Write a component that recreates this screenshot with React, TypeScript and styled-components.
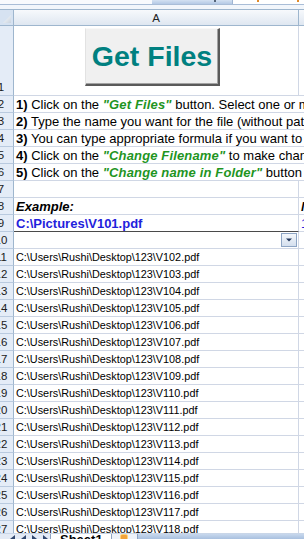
import React from 'react';
import styled, { createGlobalStyle } from 'styled-components';

const GlobalStyle = createGlobalStyle`
  html, body { margin: 0; padding: 0; background: #fff; }
  body { font-family: "Liberation Sans", Arial, sans-serif; color: #000; }
`;

const Window = styled.div`
  width: 304px;
  height: 539px;
  overflow: hidden;
  display: flex;
  flex-direction: column;
  background: #fff;
`;

/* ---------- top strip (formula bar edge) ---------- */
const TopStrip = styled.div`
  height: 9px;
  flex: none;
  display: flex;
  flex-direction: column;
  background: #f2f6fb;
`;
const FormulaEdge = styled.div`
  height: 5px;
  flex: none;
  display: flex;
  box-sizing: border-box;
  border-bottom: 1px solid #a9bdd7;
`;
const EdgeLight = styled.div`
  width: 152px;
  background: #f8fafd;
`;
const EdgeBlue = styled.div`
  width: 80px;
  display: flex;
  justify-content: flex-end;
  padding-right: 16px;
  box-sizing: border-box;
  background: linear-gradient(#d3e1f2, #b4c9e5);
`;
const EdgeTick = styled.div`
  width: 2px;
  height: 2px;
  background: #55657a;
`;
const EdgeWhite = styled.div`
  flex: 1;
  display: flex;
  gap: 38px;
  padding-left: 24px;
  background: #fff;
  border-left: 1px solid #9fb5d2;
`;
const Speck = styled.div`
  width: 2px;
  height: 2px;
  background: #e08a2a;
`;

/* ---------- column header ---------- */
const HeaderRow = styled.div`
  height: 17px;
  flex: none;
  display: flex;
  box-sizing: border-box;
  border-top: 1px solid #9eb6ce;
  border-bottom: 1px solid #9eb6ce;
`;
const Corner = styled.div`
  width: 14px;
  flex: none;
  box-sizing: border-box;
  border-right: 1px solid #9eb6ce;
  background: #d6e2f1;
  display: flex;
  align-items: flex-end;
  justify-content: flex-end;
  padding: 0 2px 2px 0;
`;
const ColHead = styled.div<{ $main?: boolean }>`
  box-sizing: border-box;
  ${(p) => (p.$main ? 'width: 285px; flex: none; border-right: 1px solid #9eb6ce;' : 'flex: 1;')}
  background: linear-gradient(#f7f9fc, #dfe7f1);
  display: flex;
  align-items: center;
  justify-content: center;
  font-size: 11.5px;
  color: #222;
`;

/* ---------- sheet body ---------- */
const Body = styled.div`
  flex: 1;
  min-height: 0;
  overflow: hidden;
  display: flex;
  flex-direction: column;
`;
const Row = styled.div<{ $h?: number }>`
  height: ${(p) => p.$h ?? 17}px;
  flex: none;
  display: flex;
`;
const RowHead = styled.div`
  width: 14px;
  flex: none;
  box-sizing: border-box;
  border-right: 1px solid #9eb6ce;
  border-bottom: 1px solid #b9cadf;
  background: #e4ecf7;
  overflow: hidden;
  display: flex;
  align-items: flex-end;
`;
const RowNum = styled.span`
  width: 24px;
  margin-left: -11px;
  flex: none;
  text-align: center;
  line-height: 16px;
  font-size: 11.5px;
  color: #1b1b1b;
`;
const Cell = styled.div<{ $kind: 'a' | 'b' | 'wide'; $rule?: boolean }>`
  box-sizing: border-box;
  display: flex;
  align-items: center;
  padding: 0 2px;
  white-space: nowrap;
  overflow: hidden;
  border-bottom: 1px solid ${(p) => (p.$rule ? '#4a4a4a' : '#d0d7e5')};
  ${(p) =>
    p.$kind === 'a'
      ? 'width: 285px; flex: none; border-right: 1px solid #d0d7e5;'
      : 'flex: 1; min-width: 0;'}
`;
const ButtonCell = styled(Cell)`
  align-items: flex-start;
  padding: 2px 0 0 71px;
`;
const FilterCell = styled(Cell)`
  justify-content: flex-end;
  padding: 0 1px 0 0;
`;

/* ---------- cell contents ---------- */
const GetFilesButton = styled.div`
  width: 135px;
  height: 58px;
  box-sizing: border-box;
  display: flex;
  align-items: center;
  justify-content: center;
  background: #f0f0f0;
  border-style: solid;
  border-width: 1px 2px 2px 1px;
  border-color: #f8f8f8 #5a5a5a #5a5a5a #e2e2e2;
  box-shadow: inset -1px -1px 0 #a3a3a3;
  font-size: 28.5px;
  font-weight: bold;
  color: #008080;
`;
const Instruction = styled.span`
  font-size: 13px;
`;
const Step = styled.b`
  font-weight: bold;
`;
const Quote = styled.span`
  font-weight: bold;
  font-style: italic;
  color: #1f951f;
  letter-spacing: 0.15px;
`;
const Label = styled.span`
  font-size: 13px;
  font-weight: bold;
  font-style: italic;
`;
const ExamplePath = styled.span<{ $thin?: boolean }>`
  font-size: 13px;
  font-weight: ${(p) => (p.$thin ? 'normal' : 'bold')};
  color: #1f22dc;
`;
const PathText = styled.span`
  font-size: 10.85px;
  color: #000;
`;
const Dropdown = styled.div`
  width: 16px;
  height: 14px;
  box-sizing: border-box;
  border: 1px solid #8ea5c4;
  background: linear-gradient(#f4f7fb, #d4dfee);
  display: flex;
  align-items: center;
  justify-content: center;
`;

/* ---------- sheet tabs ---------- */
const TabBar = styled.div`
  height: 6px;
  flex: none;
  display: flex;
  overflow: hidden;
  border-top: 1px solid #c9d6e8;
  box-sizing: border-box;
`;
const TabNav = styled.div`
  width: 50px;
  flex: none;
  display: flex;
  align-items: flex-start;
  gap: 4px;
  padding: 1px 0 0 9px;
  box-sizing: border-box;
  background: #e3eaf5;
`;
const SheetTab = styled.div`
  width: 62px;
  flex: none;
  box-sizing: border-box;
  padding-left: 9px;
  background: #fff;
  border-left: 1px solid #8ea3c0;
  border-right: 1px solid #8ea3c0;
  font-size: 13px;
  font-weight: bold;
  line-height: 14px;
  margin-top: -1px;
`;
const InsertTab = styled.div`
  width: 26px;
  flex: none;
  box-sizing: border-box;
  padding: 1px 0 0 9px;
  background: #edf2f9;
  border-right: 1px solid #8ea3c0;
`;
const InsertIcon = styled.div`
  width: 6px;
  height: 6px;
  border-radius: 1px;
  background: #f0a23a;
  box-shadow: 0 0 0 1px #ffd27a;
`;
const ScrollArea = styled.div`
  flex: 1;
  background: linear-gradient(#c8d8ed, #a8c0df);
`;

const NavArrow = ({ dir }: { dir: 'l' | 'r' }) => (
  <svg width="7" height="8" viewBox="0 0 7 8">
    {dir === 'l' ? <polygon points="6,0 6,8 1,4" fill="#30476e" /> : <polygon points="1,0 1,8 6,4" fill="#30476e" />}
  </svg>
);

const rowFiles = Array.from({ length: 17 }, (_, i) => ({
  n: 11 + i,
  path: `C:\\Users\\Rushi\\Desktop\\123\\V${102 + i}.pdf`,
}));

const Head = ({ n }: { n: number }) => (
  <RowHead>
    <RowNum>{n}</RowNum>
  </RowHead>
);

export default function App() {
  return (
    <Window>
      <GlobalStyle />
      <TopStrip>
        <FormulaEdge>
          <EdgeLight />
          <EdgeBlue>
            <EdgeTick />
          </EdgeBlue>
          <EdgeWhite>
            <Speck />
            <Speck />
          </EdgeWhite>
        </FormulaEdge>
      </TopStrip>

      <HeaderRow>
        <Corner>
          <svg width="8" height="8" viewBox="0 0 8 8">
            <defs>
              <linearGradient id="cg" x1="0" y1="0" x2="1" y2="1">
                <stop offset="0" stopColor="#ffffff" />
                <stop offset="1" stopColor="#c9d3df" />
              </linearGradient>
            </defs>
            <polygon points="8,0 8,8 0,8" fill="url(#cg)" />
          </svg>
        </Corner>
        <ColHead $main>A</ColHead>
        <ColHead />
      </HeaderRow>

      <Body>
        <Row $h={70}>
          <Head n={1} />
          <ButtonCell $kind="a">
            <GetFilesButton>Get Files</GetFilesButton>
          </ButtonCell>
          <Cell $kind="b" />
        </Row>
        <Row>
          <Head n={2} />
          <Cell $kind="wide">
            <Instruction>
              <Step>1)</Step> Click on the <Quote>"Get Files"</Quote> button. Select one or more files
            </Instruction>
          </Cell>
        </Row>
        <Row>
          <Head n={3} />
          <Cell $kind="wide">
            <Instruction>
              <Step>2)</Step> Type the name you want for the file (without path)
            </Instruction>
          </Cell>
        </Row>
        <Row>
          <Head n={4} />
          <Cell $kind="wide">
            <Instruction>
              <Step>3)</Step> You can type appropriate formula if you want to change
            </Instruction>
          </Cell>
        </Row>
        <Row>
          <Head n={5} />
          <Cell $kind="wide">
            <Instruction>
              <Step>4)</Step> Click on the <Quote>"Change Filename"</Quote> to make changes
            </Instruction>
          </Cell>
        </Row>
        <Row>
          <Head n={6} />
          <Cell $kind="wide">
            <Instruction>
              <Step>5)</Step> Click on the <Quote>"Change name in Folder"</Quote> button to
            </Instruction>
          </Cell>
        </Row>
        <Row>
          <Head n={7} />
          <Cell $kind="a" />
          <Cell $kind="b" />
        </Row>
        <Row>
          <Head n={8} />
          <Cell $kind="a">
            <Label>Example:</Label>
          </Cell>
          <Cell $kind="b">
            <Label>New Name:</Label>
          </Cell>
        </Row>
        <Row>
          <Head n={9} />
          <Cell $kind="a" $rule>
            <ExamplePath>C:\Pictures\V101.pdf</ExamplePath>
          </Cell>
          <Cell $kind="b">
            <ExamplePath $thin>101.pdf</ExamplePath>
          </Cell>
        </Row>
        <Row>
          <Head n={10} />
          <FilterCell $kind="a">
            <Dropdown>
              <svg width="8" height="6" viewBox="0 0 8 6">
                <polygon points="1,1.5 7,1.5 4,4.5" fill="#24395e" />
              </svg>
            </Dropdown>
          </FilterCell>
          <Cell $kind="b" />
        </Row>
        {rowFiles.map((r) => (
          <Row key={r.n}>
            <Head n={r.n} />
            <Cell $kind="a">
              <PathText>{r.path}</PathText>
            </Cell>
            <Cell $kind="b" />
          </Row>
        ))}
      </Body>

      <TabBar>
        <TabNav>
          <NavArrow dir="l" />
          <NavArrow dir="l" />
          <NavArrow dir="r" />
          <NavArrow dir="r" />
        </TabNav>
        <SheetTab>Sheet1</SheetTab>
        <InsertTab>
          <InsertIcon />
        </InsertTab>
        <ScrollArea />
      </TabBar>
    </Window>
  );
}
